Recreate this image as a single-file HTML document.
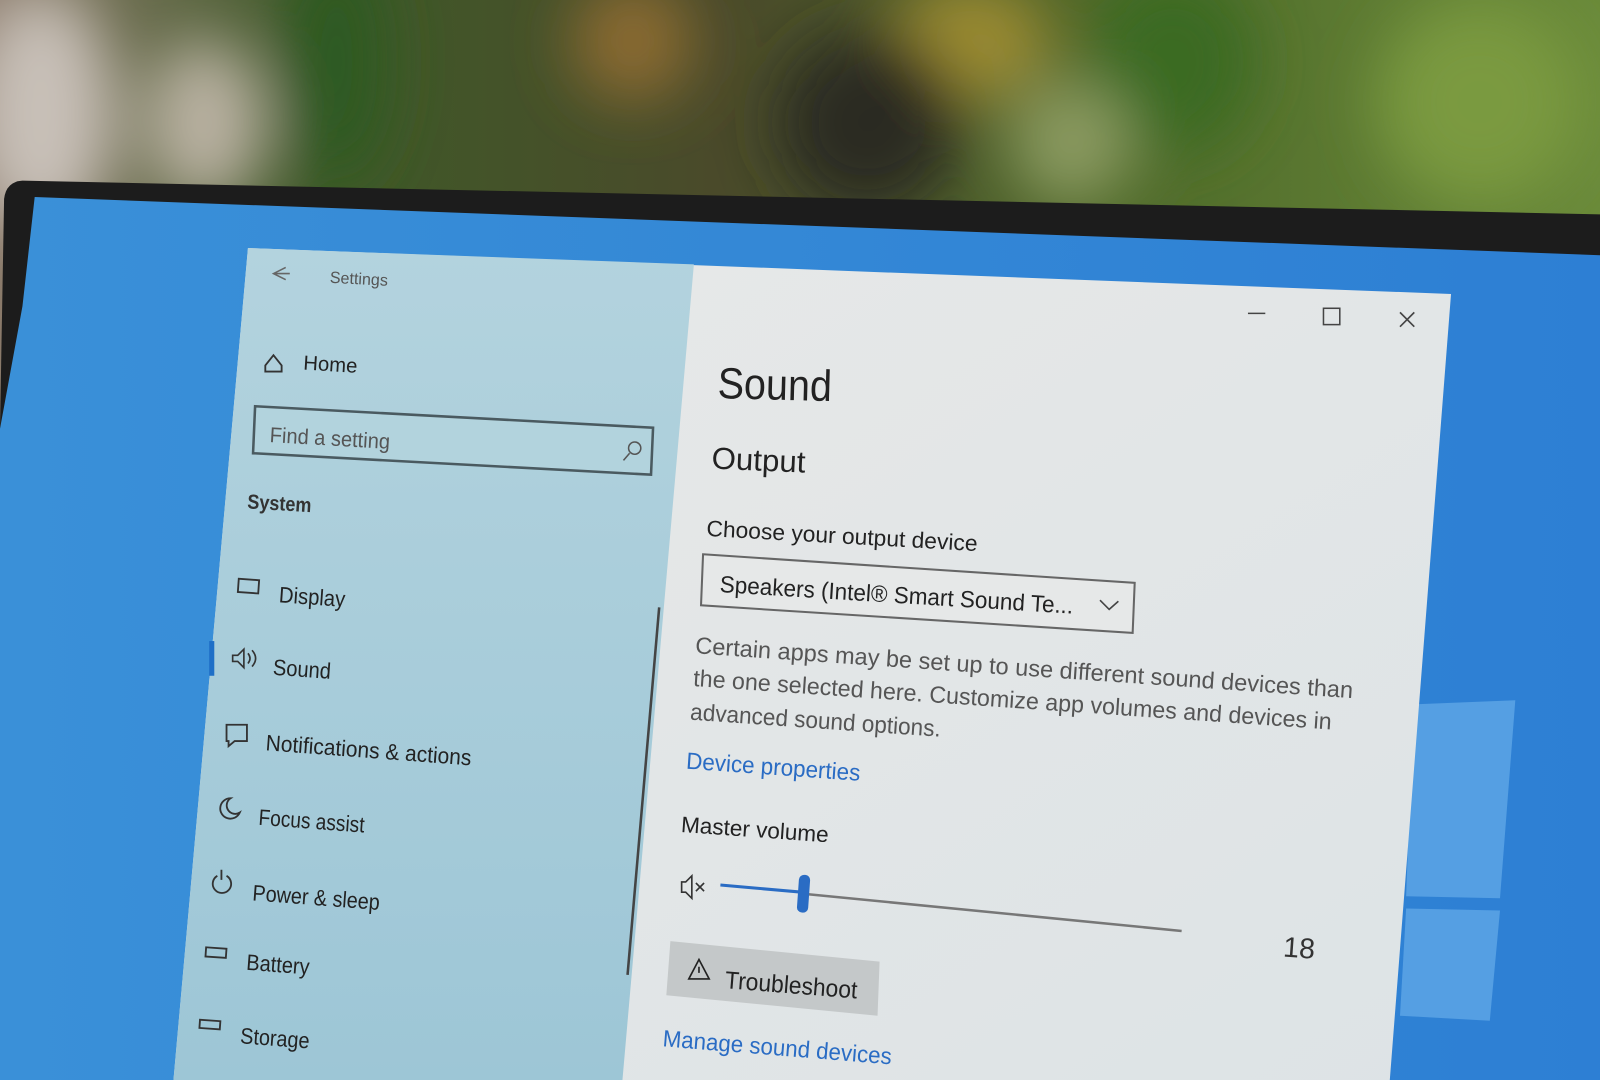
<!DOCTYPE html>
<html><head><meta charset="utf-8"><style>
html,body{margin:0;padding:0;width:1600px;height:1080px;overflow:hidden;background:#3d4a2c}
svg{display:block}
text{font-family:"Liberation Sans",sans-serif}
</style></head><body>
<svg width="1600" height="1080" viewBox="0 0 1568 1058" preserveAspectRatio="none">
<defs>
<filter id="b" x="-50%" y="-50%" width="200%" height="200%"><feGaussianBlur stdDeviation="30"/></filter>
<linearGradient id="bg" x1="0" y1="0" x2="1" y2="0">
<stop offset="0" stop-color="#8a7a6a"/><stop offset="0.2" stop-color="#3f5a28"/><stop offset="0.45" stop-color="#4a4a2a"/><stop offset="0.7" stop-color="#4f6a2a"/><stop offset="1" stop-color="#6a8a3a"/></linearGradient>
<linearGradient id="side" x1="0" y1="0" x2="0" y2="1"><stop offset="0" stop-color="#b3d3de"/><stop offset="1" stop-color="#9dc6d6"/></linearGradient>
<linearGradient id="cont" x1="0" y1="0" x2="1" y2="1"><stop offset="0" stop-color="#e8e9e8"/><stop offset="1" stop-color="#dde3e6"/></linearGradient>
<linearGradient id="scr" x1="0" y1="0" x2="1" y2="0"><stop offset="0" stop-color="#3a90d8"/><stop offset="1" stop-color="#2d7fd4"/></linearGradient>
</defs>
<rect width="1568" height="1058" fill="url(#bg)"/>
<g filter="url(#b)">
<ellipse cx="40" cy="110" rx="70" ry="120" fill="#c8c0b8"/>
<ellipse cx="200" cy="120" rx="60" ry="80" fill="#b8b0a0"/>
<ellipse cx="330" cy="60" rx="50" ry="120" fill="#2f5a20"/>
<ellipse cx="620" cy="40" rx="60" ry="60" fill="#8a6a30"/>
<ellipse cx="950" cy="40" rx="80" ry="60" fill="#9a8a30"/>
<ellipse cx="850" cy="120" rx="90" ry="90" fill="#2a2a20"/>
<ellipse cx="1150" cy="60" rx="80" ry="90" fill="#3a6a20"/>
<ellipse cx="1450" cy="100" rx="100" ry="100" fill="#7a9a40"/>
<ellipse cx="1050" cy="140" rx="60" ry="60" fill="#8a9a60"/>
</g>
<path d="M0,420 L4,195 Q6,178 22,177 L1568,210 L1568,1058 L0,1058Z" fill="#1c1c1c"/>
<polygon points="34,193 1568,250 1568,1058 0,1058 0,420 22,300" fill="url(#scr)"/>
<polygon points="1385,690 1485,686 1470,880 1378,878" fill="#5fa6e6" opacity="0.8"/>
<polygon points="1378,890 1470,892 1460,1000 1372,995" fill="#5fa6e6" opacity="0.8"/>
<polygon points="243,243 1422,288 1362,1058 170,1058" fill="url(#cont)"/>
<polygon points="243,243 680,259 610,1058 170,1058" fill="url(#side)"/>
<path d="M280,262 l-12,6 l12,6 M268,268 h16" stroke="#666" stroke-width="1.5" fill="none"/>
<text x="323" y="277" font-size="16" fill="#555" textLength="57" lengthAdjust="spacingAndGlyphs" transform="rotate(3 323 277)">Settings</text>
<path d="M260,358 l8,-10 l8,10 v6 h-16z" stroke="#333" stroke-width="1.8" fill="none"/>
<text x="297" y="362" font-size="20" fill="#222" textLength="53" lengthAdjust="spacingAndGlyphs" transform="rotate(3.5 297 362)">Home</text>
<polygon points="250,398 640,419 638,465 248,444" fill="#b2d3dd" stroke="#4a5a60" stroke-width="2.5"/>
<text x="264" y="433" font-size="21" fill="#555" textLength="118" lengthAdjust="spacingAndGlyphs" transform="rotate(3.3 264 433)">Find a setting</text>
<circle cx="622" cy="439" r="6" stroke="#555" stroke-width="1.5" fill="none"/><path d="M617,444 l-6,7" stroke="#555" stroke-width="1.5"/>
<text x="242" y="498" font-size="20" font-weight="bold" fill="#333" textLength="63" lengthAdjust="spacingAndGlyphs" transform="rotate(3.5 242 498)">System</text>
<g font-size="22" fill="#222">
<rect x="234" y="567" width="20" height="13" stroke="#333" stroke-width="1.8" fill="none" transform="rotate(4 234 567)"/>
<text x="273" y="590" textLength="65" lengthAdjust="spacingAndGlyphs" transform="rotate(4 273 590)">Display</text>
<rect x="205" y="628" width="5" height="34" fill="#1f6fc7"/>
<path d="M228,642 h5 l6,-6 v18 l-6,-6 h-5z M243,640 q4,5 0,10 M247,637 q7,8 0,16" stroke="#333" stroke-width="1.6" fill="none"/>
<text x="267" y="661" textLength="57" lengthAdjust="spacingAndGlyphs" transform="rotate(4 267 661)">Sound</text>
<path d="M222,710 h20 v16 h-12 l-6,5 v-5 h-2z" stroke="#333" stroke-width="1.8" fill="none"/>
<text x="260" y="735" textLength="202" lengthAdjust="spacingAndGlyphs" transform="rotate(4.2 260 735)">Notifications &amp; actions</text>
<path d="M226,782 a10,10 0 1 0 9,14 a8,8 0 0 1 -9,-14z" stroke="#333" stroke-width="1.8" fill="none"/>
<text x="253" y="808" textLength="104" lengthAdjust="spacingAndGlyphs" transform="rotate(4.2 253 808)">Focus assist</text>
<path d="M213,858 a9,9 0 1 0 9,0 M217,852 v10" stroke="#333" stroke-width="1.8" fill="none"/>
<text x="247" y="882" textLength="125" lengthAdjust="spacingAndGlyphs" transform="rotate(4.3 247 882)">Power &amp; sleep</text>
<rect x="202" y="928" width="20" height="9" stroke="#333" stroke-width="1.8" fill="none" transform="rotate(4 202 928)"/>
<text x="241" y="950" textLength="62" lengthAdjust="spacingAndGlyphs" transform="rotate(4.3 241 950)">Battery</text>
<rect x="196" y="999" width="20" height="8" stroke="#333" stroke-width="1.8" fill="none" transform="rotate(4 196 999)"/>
<text x="235" y="1022" textLength="68" lengthAdjust="spacingAndGlyphs" transform="rotate(4.3 235 1022)">Storage</text>
</g>
<path d="M646,595 L615,955" stroke="#444" stroke-width="2.5"/>
<path d="M1223,307 h17" stroke="#444" stroke-width="1.5"/>
<rect x="1297" y="302" width="16" height="16" stroke="#444" stroke-width="1.5" fill="none"/>
<path d="M1372,306 l14,14 M1386,306 l-14,14" stroke="#444" stroke-width="1.6"/>
<text x="703" y="390" font-size="43" fill="#222" textLength="112" lengthAdjust="spacingAndGlyphs" transform="rotate(1.5 703 390)">Sound</text>
<text x="697" y="459" font-size="30" fill="#222" textLength="92" lengthAdjust="spacingAndGlyphs" transform="rotate(2.5 697 459)">Output</text>
<text x="692" y="525" font-size="22" fill="#222" textLength="266" lengthAdjust="spacingAndGlyphs" transform="rotate(3.2 692 525)">Choose your output device</text>
<polygon points="689,543 1112,571 1110,620 687,593" fill="#e6e8e8" stroke="#666" stroke-width="2"/>
<text x="705" y="580" font-size="23" fill="#222" textLength="347" lengthAdjust="spacingAndGlyphs" transform="rotate(3.5 705 580)">Speakers (Intel® Smart Sound Te...</text>
<path d="M1078,588 l9,9 l9,-8" stroke="#444" stroke-width="1.6" fill="none"/>
<g font-size="23" fill="#555">
<text x="681" y="640" textLength="646" lengthAdjust="spacingAndGlyphs" transform="rotate(3.9 681 640)">Certain apps may be set up to use different sound devices than</text>
<text x="679" y="672" textLength="627" lengthAdjust="spacingAndGlyphs" transform="rotate(3.9 679 672)">the one selected here. Customize app volumes and devices in</text>
<text x="676" y="705" textLength="246" lengthAdjust="spacingAndGlyphs" transform="rotate(3.9 676 705)">advanced sound options.</text>
</g>
<text x="672" y="753" font-size="23" fill="#2a6cc4" textLength="171" lengthAdjust="spacingAndGlyphs" transform="rotate(4 672 753)">Device properties</text>
<text x="667" y="815" font-size="22" fill="#222" textLength="145" lengthAdjust="spacingAndGlyphs" transform="rotate(4 667 815)">Master volume</text>
<path d="M668,864 h4 l6,-6 v22 l-6,-6 h-4z M682,865 l8,8 M690,865 l-8,8" stroke="#333" stroke-width="1.6" fill="none"/>
<path d="M706,867 L786,874" stroke="#2a6cc4" stroke-width="3"/>
<path d="M792,876 L1158,912" stroke="#777" stroke-width="2.5"/>
<rect x="782" y="857" width="11" height="37" rx="5" fill="#2a6cc4" transform="rotate(4 787 875)"/>
<text x="1257" y="937" font-size="28" fill="#333" transform="rotate(4 1257 937)">18</text>
<polygon points="657,922 862,942 860,995 653,975" fill="#c4c8c9"/>
<path d="M685,940 l-10,19 h20z M685,947 v6" stroke="#222" stroke-width="1.6" fill="none"/>
<text x="710" y="968" font-size="24" fill="#222" textLength="130" lengthAdjust="spacingAndGlyphs" transform="rotate(4.5 710 968)">Troubleshoot</text>
<text x="649" y="1025" font-size="23" fill="#2a6cc4" textLength="225" lengthAdjust="spacingAndGlyphs" transform="rotate(4.5 649 1025)">Manage sound devices</text>
</svg>
</body></html>
